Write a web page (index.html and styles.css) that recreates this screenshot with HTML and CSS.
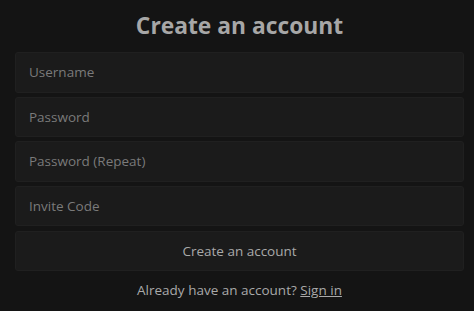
FILE: index.html
```html
<!DOCTYPE html>
<html>
<head>
<meta charset="utf-8">
<link rel="stylesheet" href="styles.css">
</head>
<body>
<div class="page">
  <h1 class="title">Create an account</h1>
  <form class="form">
    <input class="field" type="text" placeholder="Username">
    <input class="field" type="password" placeholder="Password">
    <input class="field" type="password" placeholder="Password (Repeat)">
    <input class="field" type="text" placeholder="Invite Code">
    <button class="btn" type="button">Create an account</button>
  </form>
  <p class="footer">Already have an account? <a href="#" class="link">Sign in</a></p>
</div>
</body>
</html>
```
FILE: styles.css
```css
html, body {
  margin: 0;
  padding: 0;
  background: #141414;
  height: 100%;
}
body {
  font-family: "Open Sans", "Noto Sans", sans-serif;
}
.page {
  padding: 9px 10px 0 15px;
  display: flex;
  flex-direction: column;
}
.title {
  margin: 0;
  text-align: center;
  font-size: 22.8px;
  font-weight: 700;
  color: #a7a7a7;
  line-height: 34px;
  height: 43px;
}
.form {
  display: flex;
  flex-direction: column;
  gap: 4px;
  margin: 0;
}
.field, .btn {
  box-sizing: border-box;
  height: 40.5px;
  width: 100%;
  background: #1b1b1b;
  border: 1px solid #202020;
  border-radius: 3px;
  font-family: "Open Sans", "Noto Sans", sans-serif;
  font-size: 13.5px;
  color: #aaa;
  padding: 0 13px;
  outline: none;
}
.field::placeholder {
  color: #7a7a7a;
}
.btn {
  text-align: center;
  color: #a9a9a9;
  margin-top: 1px;
  height: 39.5px;
}
.footer {
  margin: 10px 0 0;
  text-align: center;
  font-size: 13.5px;
  color: #a9a9a9;
}
.link {
  color: #a9a9a9;
  text-decoration: underline;
}
```
